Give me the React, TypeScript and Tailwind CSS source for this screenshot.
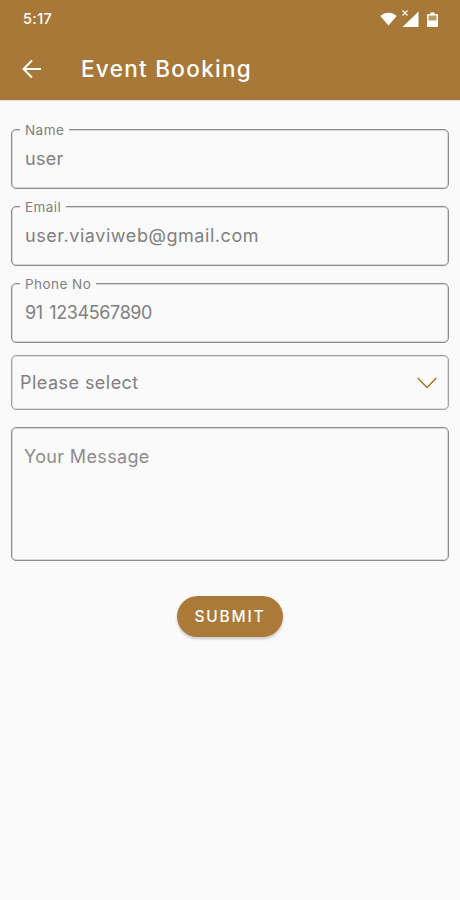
import React from "react";

const font = { fontFamily: '"Inter", "Liberation Sans", sans-serif' };
const edge = "border border-[#8c8c8c] shadow-[inset_0_0_0_1px_rgba(140,140,140,0.3)]";

function Field({ label, value, track }: { label: string; value: string; track: string }) {
  return (
    <div className={`relative h-[60px] rounded-[5px] pl-[13px] pt-[16px] ${edge}`}>
      <span className="absolute left-[8px] top-[-8px] bg-[#fafafa] px-[5px] text-[13.500px] leading-[16px] tracking-[0.45px] text-[#7f7f7f]">
        {label}
      </span>
      <div className={`leading-[26px] text-[#808080] ${track}`}>{value}</div>
    </div>
  );
}

export default function App() {
  return (
    <div className="flex min-h-[900px] w-[460px] flex-col bg-[#fafafa]" style={font}>
      <header className="h-[100px] bg-[#a77838] text-white shadow-[0_1px_1px_rgba(0,0,0,0.08)]">
        <div className="flex h-[38px] items-center justify-between pl-[23px] pr-[22px]">
          <span className="text-[14.500px] font-medium leading-[40px] tracking-[0.4px]">5:17</span>
          <div className="flex items-center">
            <svg width="17" height="14" viewBox="0 0 17 14">
              <path d="M0.300 4C2.500 1.900 5.400 0.700 8.500 0.700s6 1.200 8.200 3.300L8.500 13.500z" fill="#fff" />
            </svg>
            <svg width="18" height="18" viewBox="0 0 18 18" className="ml-[4px]">
              <path d="M17.500 1.500V17H1.500z" fill="#fff" />
              <path d="M1.500 0.500l5 5M6.500 0.500l-5 5" stroke="#fff" strokeWidth="1.100" />
            </svg>
            <svg width="11" height="15" viewBox="0 0 11 15" className="ml-[8px]">
              <path d="M3.500 0.500h4V2H10a1 1 0 0 1 1 1v11a1 1 0 0 1-1 1H1a1 1 0 0 1-1-1V3a1 1 0 0 1 1-1h2.500z" fill="#fff" />
              <rect x="1.500" y="3.500" width="8" height="5" fill="#a77838" opacity="0.75" />
            </svg>
          </div>
        </div>
        <div className="flex h-[62px] items-center pb-[1px] pl-[22px]">
          <svg width="20" height="20" viewBox="0 0 20 20" fill="none" stroke="#fff" strokeWidth="2">
            <path d="M19 10H2M10 1.500L1.500 10l8.500 8.500" />
          </svg>
          <h1 className="ml-[39px] text-[22.500px] font-medium leading-[28px] tracking-[1.300px]">Event Booking</h1>
        </div>
      </header>

      <main className="flex flex-col px-[11px] pt-[29px]">
        <div className="flex flex-col gap-[17px]">
          <Field label="Name" value="user" track="text-[18px] tracking-[0.3px]" />
          <Field label="Email" value="user.viaviweb@gmail.com" track="text-[18px] tracking-[0.56px]" />
          <Field label="Phone No" value="91 1234567890" track="text-[18px] tracking-[-0.4px] [word-spacing:2px]" />
        </div>

        <div className="mt-[12px] flex h-[55px] items-center justify-between rounded-[5px] border border-[#a0a0a0] pl-[8px] pr-[11px] shadow-[inset_0_0_0_1px_rgba(160,160,160,0.3)]">
          <span className="text-[18px] tracking-[0.46px] text-[#808080]">Please select</span>
          <svg width="20" height="12" viewBox="0 0 20 12" fill="none" stroke="#a8701f" strokeWidth="1.400">
            <path d="M0.700 1L10 10.500 19.300 1" />
          </svg>
        </div>

        <div className={`mt-[17px] h-[134px] rounded-[5px] pl-[12px] pt-[16px] ${edge}`}>
          <span className="text-[18px] leading-[26px] tracking-[0.35px] text-[#8c8c8c]">Your Message</span>
        </div>

        <button className="mx-auto mt-[35px] flex h-[41px] w-[106px] items-center justify-center rounded-full bg-[#ab7a39] text-[15.500px] font-medium tracking-[1.800px] text-white shadow-[0_2px_3px_rgba(0,0,0,0.2)]">
          SUBMIT
        </button>
      </main>
    </div>
  );
}
